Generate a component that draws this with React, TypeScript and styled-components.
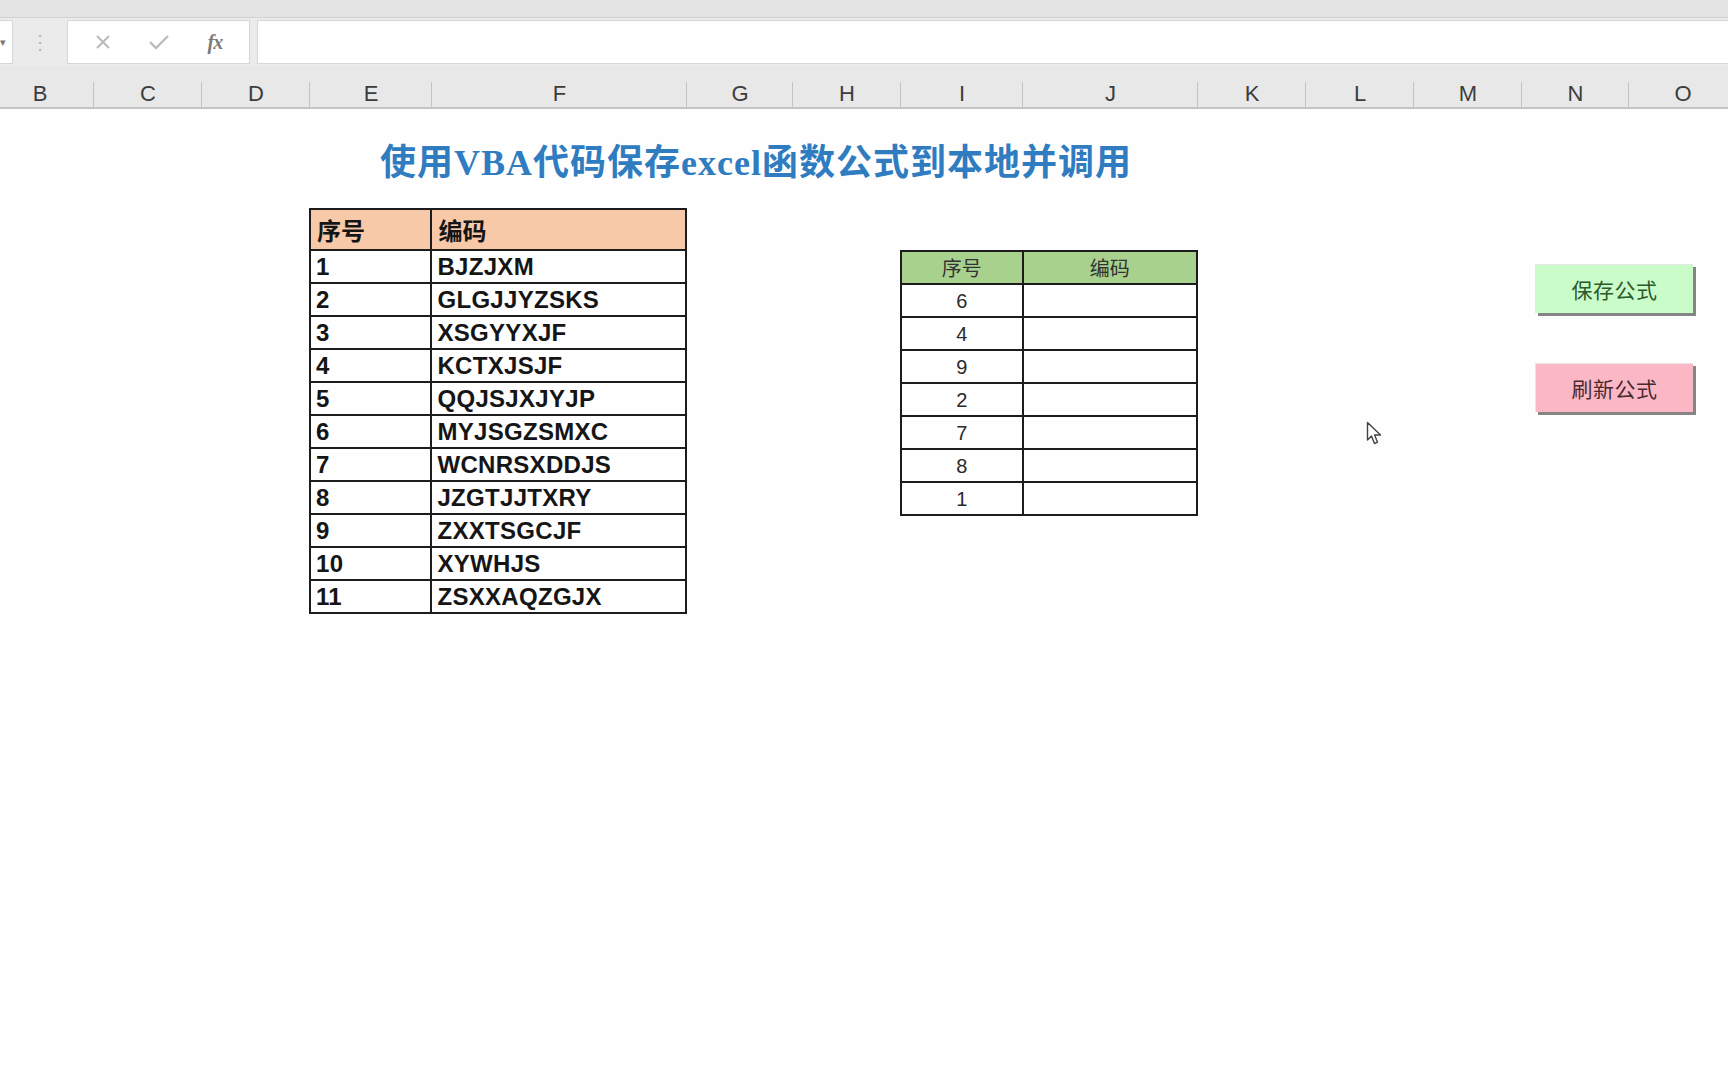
import styled, { createGlobalStyle } from 'styled-components';

const GlobalStyle = createGlobalStyle`
    html, body {
        margin: 0;
        padding: 0;
        background: #fefefe;
        overflow: hidden;
    }
    #root {
        width: 1728px;
        height: 1080px;
        overflow: hidden;
    }
`;

const COLUMNS = [
    { name: 'B', width: 108 },
    { name: 'C', width: 108 },
    { name: 'D', width: 108 },
    { name: 'E', width: 122 },
    { name: 'F', width: 255 },
    { name: 'G', width: 106 },
    { name: 'H', width: 108 },
    { name: 'I', width: 122 },
    { name: 'J', width: 175 },
    { name: 'K', width: 108 },
    { name: 'L', width: 108 },
    { name: 'M', width: 108 },
    { name: 'N', width: 107 },
    { name: 'O', width: 108 },
];

const gridColumns = COLUMNS.map((c) => `${c.width}px`).join(' ');

const codes = [
    'BJZJXM',
    'GLGJJYZSKS',
    'XSGYYXJF',
    'KCTXJSJF',
    'QQJSJXJYJP',
    'MYJSGZSMXC',
    'WCNRSXDDJS',
    'JZGTJJTXRY',
    'ZXXTSGCJF',
    'XYWHJS',
    'ZSXXAQZGJX',
];

const lookups = [6, 4, 9, 2, 7, 8, 1];

const Window = styled.div`
    width: 1728px;
    height: 1080px;
    display: flex;
    flex-direction: column;
    background: #fefefe;
    font-family: 'Liberation Sans', 'Noto Sans CJK SC', sans-serif;
`;

const TopBand = styled.div`
    height: 17px;
    background: #e4e4e4;
    border-bottom: 1px solid #d2d2d2;
    flex-shrink: 0;
`;

const FormulaBar = styled.div`
    height: 48px;
    flex-shrink: 0;
    display: flex;
    align-items: center;
    gap: 7px;
    background: #ebebeb;
`;

const NameBox = styled.div`
    width: 13px;
    height: 44px;
    box-sizing: border-box;
    background: #fff;
    border: 1px solid #d6d6d6;
    border-left: none;
    display: flex;
    align-items: center;
    color: #777;
    font-size: 11px;
    overflow: hidden;
`;

const Dots = styled.div`
    width: 40px;
    text-align: center;
    color: #b5b5b5;
    font-size: 20px;
    line-height: 1;
`;

const FnBox = styled.div`
    width: 183px;
    height: 44px;
    box-sizing: border-box;
    background: #fff;
    border: 1px solid #d6d6d6;
    display: flex;
    align-items: center;
    justify-content: space-around;
    padding: 0 8px;
`;

const FxLabel = styled.span`
    font-family: 'Liberation Serif', serif;
    font-style: italic;
    font-weight: 700;
    font-size: 20px;
    color: #7a7a7a;
    letter-spacing: -1px;
`;

const FormulaInput = styled.div`
    flex: 1;
    height: 44px;
    box-sizing: border-box;
    background: #fff;
    border: 1px solid #d6d6d6;
    border-right: none;
`;

const HeaderRow = styled.div`
    height: 41px;
    flex-shrink: 0;
    display: grid;
    grid-template-columns: ${gridColumns};
    margin-left: -14px;
    background: #e8e8e8;
    border-bottom: 2px solid #c4c4c4;
`;

const HeaderCell = styled.div`
    position: relative;
    display: flex;
    align-items: flex-end;
    justify-content: center;
    padding-bottom: 0;
    color: #3c3c3c;
    font-size: 22px;

    &::after {
        content: '';
        position: absolute;
        right: 0;
        top: 40%;
        bottom: 0;
        width: 1px;
        background: #c3c3c3;
    }
`;

const Sheet = styled.div`
    position: relative;
    flex: 1;
    margin-left: -14px;
    display: grid;
    grid-template-columns: ${gridColumns};
    grid-template-rows: 99px auto;
    align-items: start;
`;

const Title = styled.h1`
    grid-column: 4 / -1;
    grid-row: 1;
    align-self: center;
    margin: 0;
    padding: 0 0 0 70px;
    font-family: 'Liberation Serif', 'Noto Sans CJK SC', serif;
    font-weight: 700;
    font-size: 36px;
    letter-spacing: 1px;
    color: #2f7cc0;
    white-space: nowrap;
`;

const Table = styled.table<{ $col: number }>`
    grid-column: ${(p) => p.$col} / span 2;
    grid-row: 2;
    border-collapse: collapse;
    margin-left: -1px;
    table-layout: fixed;
`;

const LeftHead = styled.th`
    height: 41px;
    box-sizing: border-box;
    padding: 0 6px;
    border: 2px solid #1c1c1c;
    background: #f7c9a9;
    text-align: left;
    font-weight: 700;
    font-size: 24px;
    color: #151515;
`;

const LeftCell = styled.td`
    height: 33px;
    box-sizing: border-box;
    padding: 0 5px;
    border: 2px solid #1c1c1c;
    text-align: left;
    font-weight: 700;
    font-size: 24px;
    letter-spacing: 0.3px;
    color: #151515;
    line-height: 1;
`;

const RightTable = styled(Table)`
    margin-top: 42px;
`;

const RightHead = styled.th`
    height: 33px;
    box-sizing: border-box;
    border: 2px solid #1c1c1c;
    background: #a8d18d;
    font-weight: 400;
    font-size: 20px;
    color: #333;
`;

const RightCell = styled.td`
    height: 33px;
    box-sizing: border-box;
    border: 2px solid #1c1c1c;
    text-align: center;
    font-size: 20px;
    color: #2a2a2a;
    line-height: 1;
`;

const ShapeButton = styled.div<{ $bg: string; $fg: string; $top: number }>`
    position: absolute;
    left: 1549px;
    top: ${(p) => p.$top}px;
    width: 158px;
    height: 49px;
    box-sizing: border-box;
    display: flex;
    align-items: center;
    justify-content: center;
    background: ${(p) => p.$bg};
    border-top: 1px solid #e6e6e6;
    border-left: 1px solid #e6e6e6;
    box-shadow: 3px 3px 0 #858585;
    color: ${(p) => p.$fg};
    font-size: 21px;
    letter-spacing: 0.5px;
`;

const Cursor = styled.svg`
    position: absolute;
    left: 1380px;
    top: 312px;
`;

function App() {
    return (
        <Window>
            <GlobalStyle />
            <TopBand />
            <FormulaBar>
                <NameBox>▾</NameBox>
                <Dots>⋮</Dots>
                <FnBox>
                    <svg width="16" height="16" viewBox="0 0 16 16">
                        <path d="M2 2 L14 14 M14 2 L2 14" stroke="#b8b8b8" strokeWidth="1.8" fill="none" />
                    </svg>
                    <svg width="22" height="18" viewBox="0 0 22 18">
                        <path d="M2 9 L8 15 L20 3" stroke="#bcbcbc" strokeWidth="2.4" fill="none" />
                    </svg>
                    <FxLabel>fx</FxLabel>
                </FnBox>
                <FormulaInput />
            </FormulaBar>
            <HeaderRow>
                {COLUMNS.map((c) => (
                    <HeaderCell key={c.name}>{c.name}</HeaderCell>
                ))}
            </HeaderRow>
            <Sheet>
                <Title>使用VBA代码保存excel函数公式到本地并调用</Title>

                <Table $col={4}>
                    <colgroup>
                        <col style={{ width: 122 }} />
                        <col style={{ width: 255 }} />
                    </colgroup>
                    <thead>
                        <tr>
                            <LeftHead>序号</LeftHead>
                            <LeftHead>编码</LeftHead>
                        </tr>
                    </thead>
                    <tbody>
                        {codes.map((code, i) => (
                            <tr key={code}>
                                <LeftCell>{i + 1}</LeftCell>
                                <LeftCell>{code}</LeftCell>
                            </tr>
                        ))}
                    </tbody>
                </Table>

                <RightTable $col={8}>
                    <colgroup>
                        <col style={{ width: 122 }} />
                        <col style={{ width: 175 }} />
                    </colgroup>
                    <thead>
                        <tr>
                            <RightHead>序号</RightHead>
                            <RightHead>编码</RightHead>
                        </tr>
                    </thead>
                    <tbody>
                        {lookups.map((n) => (
                            <tr key={n}>
                                <RightCell>{n}</RightCell>
                                <RightCell />
                            </tr>
                        ))}
                    </tbody>
                </RightTable>

                <ShapeButton $bg="#c9fcc9" $fg="#2c5a2c" $top={155}>
                    保存公式
                </ShapeButton>
                <ShapeButton $bg="#fbb8c4" $fg="#4a2a30" $top={254}>
                    刷新公式
                </ShapeButton>

                <Cursor width="18" height="26" viewBox="0 0 18 26">
                    <path
                        d="M1.5 1.5 L1.5 19 L5.5 15 L8.5 22.5 L11.5 21.2 L8.6 14 L14.5 14 Z"
                        fill="#fff"
                        stroke="#444"
                        strokeWidth="1.4"
                        strokeLinejoin="round"
                    />
                </Cursor>
            </Sheet>
        </Window>
    );
}

export default App;
